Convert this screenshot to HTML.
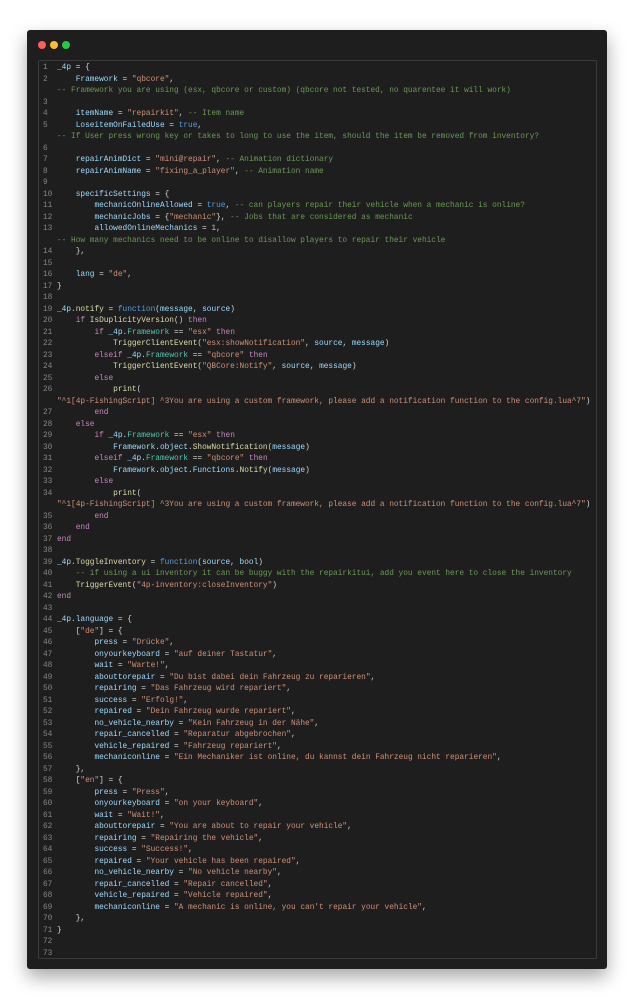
<!DOCTYPE html>
<html><head><meta charset="utf-8"><style>
html,body{margin:0;width:634px;height:1000px;background:#fff;position:relative;overflow:hidden}
.win{position:absolute;left:27px;top:30px;width:580px;height:939px;background:#1e1e1e;border-radius:3px;box-shadow:0 8px 18px rgba(0,0,0,.35)}
.d{position:absolute;top:11px;width:8px;height:8px;border-radius:50%}
.box{position:absolute;left:11px;top:30px;width:557px;height:897px;border:1px solid #3a3a3a;border-radius:2px}
.code{position:absolute;left:0;top:33px;font-family:"Liberation Mono",monospace;font-size:7.8px;line-height:11.5px;color:#d4d4d4}
.r{height:11.5px;white-space:pre}
.n{display:inline-block;width:30px;padding-left:16px;box-sizing:border-box;color:#858585}
.v{color:#9cdcfe}.s{color:#ce9178}.c{color:#6a9955}.k{color:#c586c0}.b{color:#569cd6}.f{color:#dcdcaa}.t{color:#4ec9b0}.m{color:#b5cea8}
</style></head><body>
<div class="win">
<div class="d" style="left:11px;background:#ff5f57"></div>
<div class="d" style="left:23px;background:#febc2e"></div>
<div class="d" style="left:35px;background:#28c840"></div>
<div class="box"></div>
<div class="code">
<div class="r"><span class="n">1</span><span class="v">_4p</span> = {</div>
<div class="r"><span class="n">2</span>    <span class="v">Framework</span> = <span class="s">"qbcore"</span>,</div>
<div class="r"><span class="n"></span><span class="c">-- Framework you are using (esx, qbcore or custom) (qbcore not tested, no quarentee it will work)</span></div>
<div class="r"><span class="n">3</span></div>
<div class="r"><span class="n">4</span>    <span class="v">itemName</span> = <span class="s">"repairkit"</span>, <span class="c">-- Item name</span></div>
<div class="r"><span class="n">5</span>    <span class="v">LoseitemOnFailedUse</span> = <span class="b">true</span>,</div>
<div class="r"><span class="n"></span><span class="c">-- If User press wrong key or takes to long to use the item, should the item be removed from inventory?</span></div>
<div class="r"><span class="n">6</span></div>
<div class="r"><span class="n">7</span>    <span class="v">repairAnimDict</span> = <span class="s">"mini@repair"</span>, <span class="c">-- Animation dictionary</span></div>
<div class="r"><span class="n">8</span>    <span class="v">repairAnimName</span> = <span class="s">"fixing_a_player"</span>, <span class="c">-- Animation name</span></div>
<div class="r"><span class="n">9</span></div>
<div class="r"><span class="n">10</span>    <span class="v">specificSettings</span> = {</div>
<div class="r"><span class="n">11</span>        <span class="v">mechanicOnlineAllowed</span> = <span class="b">true</span>, <span class="c">-- can players repair their vehicle when a mechanic is online?</span></div>
<div class="r"><span class="n">12</span>        <span class="v">mechanicJobs</span> = {<span class="s">"mechanic"</span>}, <span class="c">-- Jobs that are considered as mechanic</span></div>
<div class="r"><span class="n">13</span>        <span class="v">allowedOnlineMechanics</span> = <span class="m">1</span>,</div>
<div class="r"><span class="n"></span><span class="c">-- How many mechanics need to be online to disallow players to repair their vehicle</span></div>
<div class="r"><span class="n">14</span>    },</div>
<div class="r"><span class="n">15</span></div>
<div class="r"><span class="n">16</span>    <span class="v">lang</span> = <span class="s">"de"</span>,</div>
<div class="r"><span class="n">17</span>}</div>
<div class="r"><span class="n">18</span></div>
<div class="r"><span class="n">19</span><span class="v">_4p</span>.<span class="f">notify</span> = <span class="b">function</span>(<span class="v">message</span>, <span class="v">source</span>)</div>
<div class="r"><span class="n">20</span>    <span class="k">if</span> <span class="f">IsDuplicityVersion</span>() <span class="k">then</span></div>
<div class="r"><span class="n">21</span>        <span class="k">if</span> <span class="v">_4p</span>.<span class="t">Framework</span> == <span class="s">"esx"</span> <span class="k">then</span></div>
<div class="r"><span class="n">22</span>            <span class="f">TriggerClientEvent</span>(<span class="s">"esx:showNotification"</span>, <span class="v">source</span>, <span class="v">message</span>)</div>
<div class="r"><span class="n">23</span>        <span class="k">elseif</span> <span class="v">_4p</span>.<span class="t">Framework</span> == <span class="s">"qbcore"</span> <span class="k">then</span></div>
<div class="r"><span class="n">24</span>            <span class="f">TriggerClientEvent</span>(<span class="s">"QBCore:Notify"</span>, <span class="v">source</span>, <span class="v">message</span>)</div>
<div class="r"><span class="n">25</span>        <span class="k">else</span></div>
<div class="r"><span class="n">26</span>            <span class="f">print</span>(</div>
<div class="r"><span class="n"></span><span class="s">"^1[4p-FishingScript] ^3You are using a custom framework, please add a notification function to the config.lua^7"</span>)</div>
<div class="r"><span class="n">27</span>        <span class="k">end</span></div>
<div class="r"><span class="n">28</span>    <span class="k">else</span></div>
<div class="r"><span class="n">29</span>        <span class="k">if</span> <span class="v">_4p</span>.<span class="t">Framework</span> == <span class="s">"esx"</span> <span class="k">then</span></div>
<div class="r"><span class="n">30</span>            <span class="v">Framework</span>.<span class="v">object</span>.<span class="f">ShowNotification</span>(<span class="v">message</span>)</div>
<div class="r"><span class="n">31</span>        <span class="k">elseif</span> <span class="v">_4p</span>.<span class="t">Framework</span> == <span class="s">"qbcore"</span> <span class="k">then</span></div>
<div class="r"><span class="n">32</span>            <span class="v">Framework</span>.<span class="v">object</span>.<span class="v">Functions</span>.<span class="f">Notify</span>(<span class="v">message</span>)</div>
<div class="r"><span class="n">33</span>        <span class="k">else</span></div>
<div class="r"><span class="n">34</span>            <span class="f">print</span>(</div>
<div class="r"><span class="n"></span><span class="s">"^1[4p-FishingScript] ^3You are using a custom framework, please add a notification function to the config.lua^7"</span>)</div>
<div class="r"><span class="n">35</span>        <span class="k">end</span></div>
<div class="r"><span class="n">36</span>    <span class="k">end</span></div>
<div class="r"><span class="n">37</span><span class="k">end</span></div>
<div class="r"><span class="n">38</span></div>
<div class="r"><span class="n">39</span><span class="v">_4p</span>.<span class="f">ToggleInventory</span> = <span class="b">function</span>(<span class="v">source</span>, <span class="v">bool</span>)</div>
<div class="r"><span class="n">40</span>    <span class="c">-- if using a ui inventory it can be buggy with the repairkitui, add you event here to close the inventory</span></div>
<div class="r"><span class="n">41</span>    <span class="f">TriggerEvent</span>(<span class="s">"4p-inventory:closeInventory"</span>)</div>
<div class="r"><span class="n">42</span><span class="k">end</span></div>
<div class="r"><span class="n">43</span></div>
<div class="r"><span class="n">44</span><span class="v">_4p</span>.<span class="v">language</span> = {</div>
<div class="r"><span class="n">45</span>    [<span class="s">"de"</span>] = {</div>
<div class="r"><span class="n">46</span>        <span class="v">press</span> = <span class="s">"Drücke"</span>,</div>
<div class="r"><span class="n">47</span>        <span class="v">onyourkeyboard</span> = <span class="s">"auf deiner Tastatur"</span>,</div>
<div class="r"><span class="n">48</span>        <span class="v">wait</span> = <span class="s">"Warte!"</span>,</div>
<div class="r"><span class="n">49</span>        <span class="v">abouttorepair</span> = <span class="s">"Du bist dabei dein Fahrzeug zu reparieren"</span>,</div>
<div class="r"><span class="n">50</span>        <span class="v">repairing</span> = <span class="s">"Das Fahrzeug wird repariert"</span>,</div>
<div class="r"><span class="n">51</span>        <span class="v">success</span> = <span class="s">"Erfolg!"</span>,</div>
<div class="r"><span class="n">52</span>        <span class="v">repaired</span> = <span class="s">"Dein Fahrzeug wurde repariert"</span>,</div>
<div class="r"><span class="n">53</span>        <span class="v">no_vehicle_nearby</span> = <span class="s">"Kein Fahrzeug in der Nähe"</span>,</div>
<div class="r"><span class="n">54</span>        <span class="v">repair_cancelled</span> = <span class="s">"Reparatur abgebrochen"</span>,</div>
<div class="r"><span class="n">55</span>        <span class="v">vehicle_repaired</span> = <span class="s">"Fahrzeug repariert"</span>,</div>
<div class="r"><span class="n">56</span>        <span class="v">mechaniconline</span> = <span class="s">"Ein Mechaniker ist online, du kannst dein Fahrzeug nicht reparieren"</span>,</div>
<div class="r"><span class="n">57</span>    },</div>
<div class="r"><span class="n">58</span>    [<span class="s">"en"</span>] = {</div>
<div class="r"><span class="n">59</span>        <span class="v">press</span> = <span class="s">"Press"</span>,</div>
<div class="r"><span class="n">60</span>        <span class="v">onyourkeyboard</span> = <span class="s">"on your keyboard"</span>,</div>
<div class="r"><span class="n">61</span>        <span class="v">wait</span> = <span class="s">"Wait!"</span>,</div>
<div class="r"><span class="n">62</span>        <span class="v">abouttorepair</span> = <span class="s">"You are about to repair your vehicle"</span>,</div>
<div class="r"><span class="n">63</span>        <span class="v">repairing</span> = <span class="s">"Repairing the vehicle"</span>,</div>
<div class="r"><span class="n">64</span>        <span class="v">success</span> = <span class="s">"Success!"</span>,</div>
<div class="r"><span class="n">65</span>        <span class="v">repaired</span> = <span class="s">"Your vehicle has been repaired"</span>,</div>
<div class="r"><span class="n">66</span>        <span class="v">no_vehicle_nearby</span> = <span class="s">"No vehicle nearby"</span>,</div>
<div class="r"><span class="n">67</span>        <span class="v">repair_cancelled</span> = <span class="s">"Repair cancelled"</span>,</div>
<div class="r"><span class="n">68</span>        <span class="v">vehicle_repaired</span> = <span class="s">"Vehicle repaired"</span>,</div>
<div class="r"><span class="n">69</span>        <span class="v">mechaniconline</span> = <span class="s">"A mechanic is online, you can't repair your vehicle"</span>,</div>
<div class="r"><span class="n">70</span>    },</div>
<div class="r"><span class="n">71</span>}</div>
<div class="r"><span class="n">72</span></div>
<div class="r"><span class="n">73</span></div>
</div>
</div>
</body></html>
